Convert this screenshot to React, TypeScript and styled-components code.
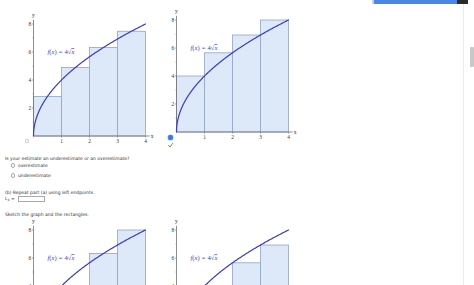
import React from "react";
import styled, { createGlobalStyle } from "styled-components";

const GlobalStyle = createGlobalStyle`
  html, body { margin: 0; padding: 0; background: #fff; overflow: hidden; }
  body { font-family: "DejaVu Sans", Verdana, sans-serif; color: #333; }
`;

const Page = styled.div`
  position: relative;
  display: flex;
  width: 474px;
  height: 285px;
  overflow: hidden;
`;

const Main = styled.main`
  flex: 1;
  min-width: 0;
  padding: 7.7px 0 0 5px;
  overflow: hidden;
`;

const ScrollTrack = styled.div`
  width: 10px;
  border-left: 1px solid #ebebeb;
  display: flex;
  justify-content: flex-end;
  align-items: flex-start;
`;

const ScrollThumb = styled.div`
  width: 4px;
  height: 20px;
  margin-top: 47px;
  background: #c8c8c8;
  border-radius: 1px;
`;

const TopBar = styled.div`
  position: absolute;
  top: 0;
  left: 372px;
  width: 96px;
  height: 4px;
  display: flex;
`;

const BarStub = styled.div`
  width: 2px;
  background: #cfcfcf;
`;

const BarFill = styled.div`
  flex: 1;
  background: #4a86e8;
`;

const BarEnd = styled.div`
  width: 11.5px;
  background: #2b2b2b;
`;

const OptionRow = styled.div`
  display: flex;
  align-items: flex-start;
  gap: 12.5px;
  padding-left: 19.5px;
`;

const Option = styled.div<{ $drop?: number }>`
  display: flex;
  align-items: flex-start;
  margin-top: ${(p) => p.$drop ?? 0}px;
`;

const MarkCol = styled.div`
  width: 5px;
  padding-top: 127.5px;
  display: flex;
  flex-direction: column;
  align-items: center;
  gap: 3px;
`;

const EmptyMark = styled.span`
  width: 4px;
  height: 4px;
  box-sizing: border-box;
  border: 1px solid #d2d2d2;
  border-radius: 1px;
  background: #f7f7f7;
`;

const SelectedMark = styled.span`
  width: 4.5px;
  height: 4.5px;
  box-sizing: border-box;
  border-radius: 50%;
  background: #3d78e3;
  box-shadow: 0 0 0 0.6px #a9c3f0;
`;

const GraphSvg = styled.svg`
  display: block;
  overflow: visible;
  flex-shrink: 0;
`;

const Question = styled.p`
  margin: 7px 0 0;
  font-size: 4.5px;
  line-height: 7px;
`;

const ChoiceList = styled.div`
  display: flex;
  flex-direction: column;
  gap: 3px;
  padding-left: 5.75px;
  margin-top: 0.4px;
`;

const Choice = styled.label`
  display: flex;
  align-items: center;
  gap: 2.6px;
  font-size: 4.5px;
  line-height: 7px;
`;

const RadioCircle = styled.span`
  width: 4.6px;
  height: 4.6px;
  box-sizing: border-box;
  border-radius: 50%;
  border: 1px solid #a8a8a8;
  background: #fff;
`;

const PartLine = styled.p<{ $gap: number }>`
  margin: ${(p) => p.$gap}px 0 0;
  font-size: 4.5px;
  line-height: 7px;
`;

const AnswerRow = styled.div`
  display: flex;
  align-items: center;
  gap: 3.5px;
  height: 7px;
  margin-top: 0.2px;
  font-size: 4.5px;
`;

const Sub = styled.sub`
  font-size: 3.2px;
  vertical-align: -1px;
`;

const AnswerBox = styled.input`
  width: 27px;
  height: 6px;
  box-sizing: border-box;
  border: 1px solid #a9a9a9;
  padding: 0;
  margin: 0;
  background: #fff;
`;

const OX = 3.5;
const OY = 124;
const UX = 28;
const UY = 14;
const px = (x: number) => OX + x * UX;
const py = (y: number) => OY - y * UY;

const curvePath = (() => {
  const pts: string[] = [];
  for (let i = 0; i <= 200; i++) {
    const x = 4 * (i / 200) ** 2;
    pts.push(`${px(x).toFixed(2)},${py(4 * Math.sqrt(x)).toFixed(2)}`);
  }
  return "M" + pts.join("L");
})();

const AXIS = "#707070";
const CURVE = "#3a3ac4";
const SERIF = "'Liberation Serif', serif";

function Graph({ heights }: { heights: number[] }) {
  return (
    <GraphSvg width={126} height={136} viewBox="0 0 126 136">
      {heights.map((h, i) => (
        <rect
          key={i}
          x={px(i)}
          y={py(h)}
          width={UX}
          height={h * UY}
          fill="#dde9f8"
          stroke="#8fa5c2"
          strokeWidth={0.8}
        />
      ))}
      <line x1={px(0)} y1={py(0)} x2={px(0)} y2={py(8.3)} stroke={AXIS} strokeWidth={0.8} />
      <line x1={px(0)} y1={py(0)} x2={px(4.15)} y2={py(0)} stroke={AXIS} strokeWidth={0.8} />
      {[1, 2, 3, 4, 5, 6, 7, 8].map((v) => (
        <line
          key={"yt" + v}
          x1={px(0) - (v % 2 === 0 ? 1.6 : 0.9)}
          y1={py(v)}
          x2={px(0)}
          y2={py(v)}
          stroke={AXIS}
          strokeWidth={0.6}
        />
      ))}
      {[2, 4, 6, 8].map((v) => (
        <text key={"yl" + v} x={px(0) - 2.4} y={py(v) + 1.8} textAnchor="end" fontFamily={SERIF} fontSize={5.4} fill="#333">
          {v}
        </text>
      ))}
      {[1, 2, 3, 4].map((v) => (
        <line key={"xt" + v} x1={px(v)} y1={py(0)} x2={px(v)} y2={py(0) + 1.6} stroke={AXIS} strokeWidth={0.6} />
      ))}
      {[1, 2, 3, 4].map((v) => (
        <text key={"xl" + v} x={px(v)} y={py(0) + 6.8} textAnchor="middle" fontFamily={SERIF} fontSize={5.4} fill="#333">
          {v}
        </text>
      ))}
      <text x={px(0) + 118.7} y={py(0) + 1.7} textAnchor="middle" fontFamily={SERIF} fontSize={5.6} fill="#333">
        x
      </text>
      <text x={px(0)} y={py(0) - 119.3} textAnchor="middle" fontFamily={SERIF} fontSize={5.6} fill="#333">
        y
      </text>
      <path d={curvePath} fill="none" stroke={CURVE} strokeWidth={1.2} strokeLinecap="round" />
      <text x={px(0.5)} y={py(6) + 2.1} fontFamily={SERIF} fontSize={6.5} fill={CURVE}>
        <tspan fontStyle="italic">f</tspan>(<tspan fontStyle="italic">x</tspan>)
        <tspan dx={2.2}>=</tspan>
        <tspan dx={2.2}>4√</tspan>
        <tspan fontStyle="italic" textDecoration="overline">x</tspan>
      </text>
    </GraphSvg>
  );
}

function CheckIcon() {
  return (
    <svg width={5} height={4.5} viewBox="0 0 10 9" style={{ display: "block" }}>
      <path d="M1 5 L4 8 L9 1" fill="none" stroke="#5d9c3a" strokeWidth={2} strokeLinecap="round" strokeLinejoin="round" />
    </svg>
  );
}

export default function App() {
  return (
    <>
      <GlobalStyle />
      <Page>
        <Main>
          <OptionRow>
            <Option $drop={4}>
              <MarkCol>
                <EmptyMark />
              </MarkCol>
              <Graph heights={[4 * Math.sqrt(0.5), 4 * Math.sqrt(1.5), 4 * Math.sqrt(2.5), 4 * Math.sqrt(3.5)]} />
            </Option>
            <Option>
              <MarkCol>
                <SelectedMark />
                <CheckIcon />
              </MarkCol>
              <Graph heights={[4, 4 * Math.sqrt(2), 4 * Math.sqrt(3), 8]} />
            </Option>
          </OptionRow>

          <Question>Is your estimate an underestimate or an overestimate?</Question>
          <ChoiceList>
            <Choice>
              <RadioCircle />
              overestimate
            </Choice>
            <Choice>
              <RadioCircle />
              underestimate
            </Choice>
          </ChoiceList>

          <PartLine $gap={9.6}>(b) Repeat part (a) using left endpoints.</PartLine>
          <AnswerRow>
            <span>
              L<Sub>4</Sub> =
            </span>
            <AnswerBox readOnly aria-label="L4" />
          </AnswerRow>

          <PartLine $gap={8.5}>Sketch the graph and the rectangles.</PartLine>
          <OptionRow>
            <Option>
              <MarkCol>
                <EmptyMark />
              </MarkCol>
              <Graph heights={[2, 3.6, 4 * Math.sqrt(2.5), 8]} />
            </Option>
            <Option>
              <MarkCol>
                <EmptyMark />
              </MarkCol>
              <Graph heights={[0, 4, 4 * Math.sqrt(2), 4 * Math.sqrt(3)]} />
            </Option>
          </OptionRow>
        </Main>
        <ScrollTrack>
          <ScrollThumb />
        </ScrollTrack>
        <TopBar>
          <BarStub />
          <BarFill />
          <BarEnd />
        </TopBar>
      </Page>
    </>
  );
}
